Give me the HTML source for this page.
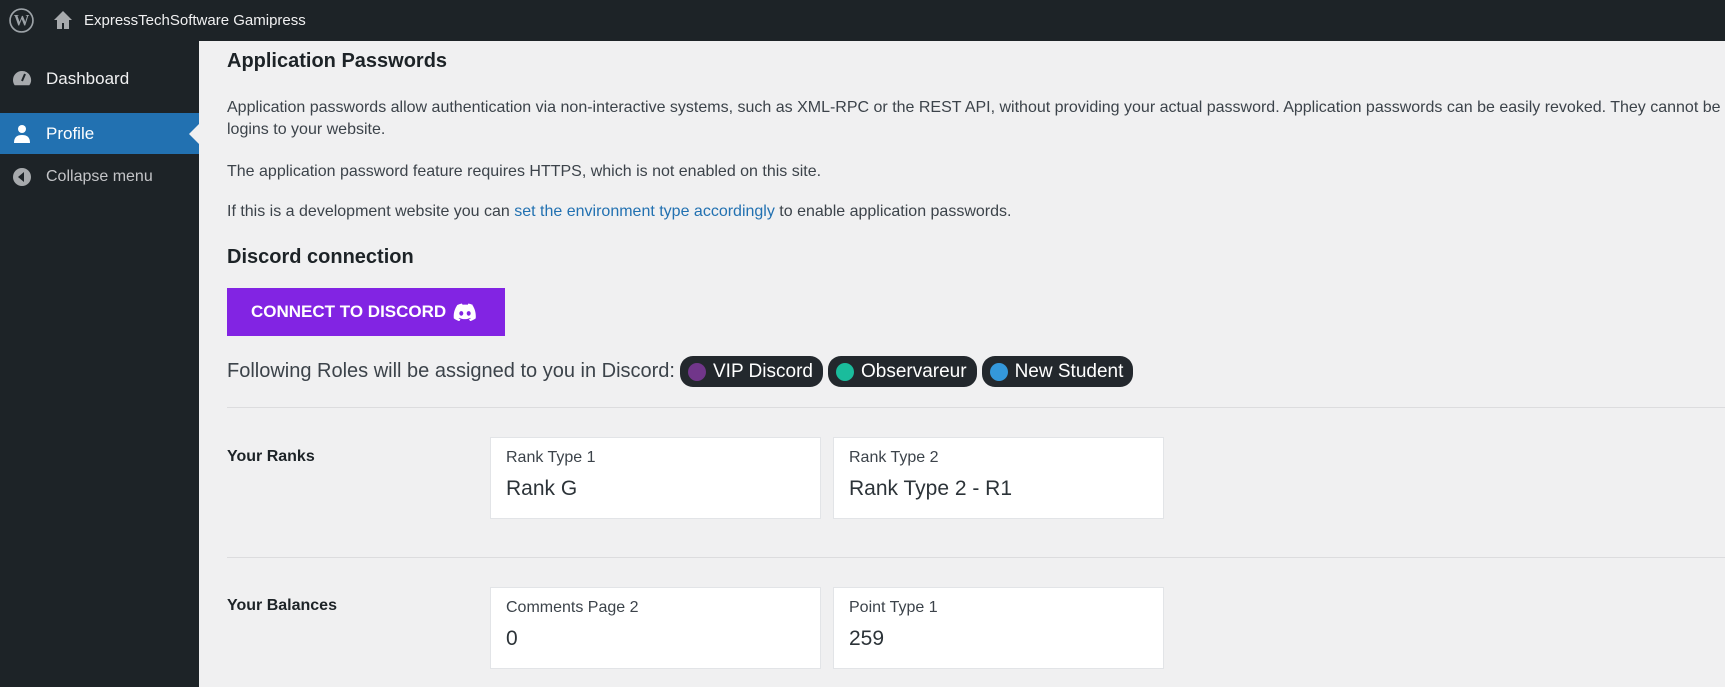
<!DOCTYPE html>
<html><head><meta charset="utf-8"><style>
*{box-sizing:border-box;margin:0;padding:0}
body{width:1725px;height:687px;overflow:hidden;background:#f0f0f1;font-family:"Liberation Sans",sans-serif;color:#3c434a;position:relative}
#bar{position:absolute;left:0;top:0;width:1725px;height:41px;background:#1d2327;color:#f0f0f1;font-size:16px}
#side{position:absolute;left:0;top:41px;width:199px;height:646px;background:#1d2327}
.mi{position:absolute;left:0;width:199px;color:#f0f0f1;font-size:17px;display:flex;align-items:center;padding-left:12px}
.mi svg{margin-right:14px}
.abs{position:absolute;white-space:nowrap}
h2{position:absolute;font-size:20px;font-weight:600;color:#1d2327;left:227px}
p{position:absolute;left:227px;font-size:16px;white-space:nowrap;color:#3c434a}
.card{position:absolute;background:#fff;border:1px solid #e2e4e7;width:331px;height:82px}
.card .t{position:absolute;left:15px;top:11px;font-size:16px;color:#3c434a}
.card .v{position:absolute;left:15px;top:39px;font-size:21px;color:#2c3338}
.pill{display:inline-flex;align-items:center;background:#23282d;color:#fff;border-radius:13px;height:31px;padding:0 10px 0 8px;margin-left:5px;font-size:19px}
.pill i{width:18px;height:18px;border-radius:50%;margin-right:7px;display:inline-block}
.hr{position:absolute;left:227px;width:1498px;height:1px;background:#dcdcde}
.lbl{position:absolute;left:227px;font-size:16px;font-weight:bold;color:#1d2327}
</style></head><body>
<div id="bar">
<svg class="abs" style="left:9px;top:8px" width="25" height="25" viewBox="0 0 24 24"><circle cx="12" cy="12" r="11" fill="none" stroke="#9ca2a7" stroke-width="1.6"/><text x="12" y="17" text-anchor="middle" font-family="Liberation Serif" font-weight="bold" font-size="15" fill="#9ca2a7">W</text></svg>
<svg class="abs" style="left:53px;top:10px" width="20" height="20" viewBox="0 0 20 20"><path d="M10 1 L1 10 H4 V19 H9 V13 H11 V19 H16 V10 H19 Z" fill="#a7aaad"/></svg>
<div class="abs" style="left:84px;top:12px;font-size:15px">ExpressTechSoftware Gamipress</div>
</div>
<div id="side">
<div class="mi" style="top:18px;height:40px"><svg width="20" height="20" viewBox="0 0 20 20"><path d="M10 2a9 9 0 0 0-9 9c0 2 .6 3.8 1.7 5.3h14.6A9 9 0 0 0 10 2z" fill="#a7aaad"/><path d="M10 12 L13 5" stroke="#1d2327" stroke-width="2"/></svg>Dashboard</div>
<div class="mi" style="top:72px;height:41px;background:#2271b1;color:#fff"><svg width="20" height="20" viewBox="0 0 20 20"><circle cx="10" cy="5" r="4" fill="#fff"/><path d="M2 19c0-6 3-8 8-8s8 2 8 8z" fill="#fff"/></svg>Profile</div>
<div style="position:absolute;left:189px;top:83px;width:0;height:0;border-top:10px solid transparent;border-bottom:10px solid transparent;border-right:10px solid #f0f0f1"></div>
<div class="mi" style="top:118px;height:36px;color:#c3c4c7;font-size:16px"><svg width="20" height="20" viewBox="0 0 20 20"><circle cx="10" cy="10" r="9" fill="#a7aaad"/><path d="M12 5 L6 10 L12 15z" fill="#1d2327"/></svg>Collapse menu</div>
</div>
<h2 style="top:50px">Application Passwords</h2>
<p style="top:99px">Application passwords allow authentication via non-interactive systems, such as XML-RPC or the REST API, without providing your actual password. Application passwords can be easily revoked. They cannot be</p>
<p style="top:121px">logins to your website.</p>
<p style="top:163px">The application password feature requires HTTPS, which is not enabled on this site.</p>
<p style="top:203px">If this is a development website you can <span style="color:#2271b1">set the environment type accordingly</span> to enable application passwords.</p>
<h2 style="top:246px">Discord connection</h2>
<div class="abs" style="left:227px;top:288px;width:278px;height:48px;background:#8224e3;color:#fff;font-weight:bold;font-size:17px;display:flex;align-items:center;padding-left:24px">CONNECT TO DISCORD <svg style="margin-left:7px" width="24" height="18" viewBox="0 0 24 18"><path d="M20 2C18.5 1.3 17 .8 15.4.5l-.7 1.3c-1.7-.3-3.4-.3-5.1 0L8.9.5C7.3.8 5.8 1.3 4.3 2 1.2 6.6.4 11 .8 15.4c1.9 1.4 3.7 2.2 5.5 2.8l1.2-1.9c-.7-.3-1.3-.6-1.9-1l.5-.4c3.7 1.7 7.7 1.7 11.3 0l.5.4c-.6.4-1.2.7-1.9 1l1.2 1.9c1.8-.6 3.6-1.4 5.5-2.8.5-5.1-.8-9.5-3.3-13.4zM8.3 12.7c-1.1 0-2-1-2-2.3s.9-2.3 2-2.3 2 1 2 2.3-.9 2.3-2 2.3zm7.4 0c-1.1 0-2-1-2-2.3s.9-2.3 2-2.3 2 1 2 2.3-.9 2.3-2 2.3z" fill="#fff"/></svg></div>
<div class="abs" style="left:227px;top:356px;font-size:20px;display:flex;align-items:center;color:#3c434a">Following Roles will be assigned to you in Discord:<span class="pill"><i style="background:#71368a"></i>VIP Discord</span><span class="pill"><i style="background:#1abc9c"></i>Observareur</span><span class="pill"><i style="background:#3498db"></i>New Student</span></div>
<div class="hr" style="top:407px"></div>
<div class="lbl" style="top:448px">Your Ranks</div>
<div class="card" style="left:490px;top:437px"><div class="t">Rank Type 1</div><div class="v">Rank G</div></div>
<div class="card" style="left:833px;top:437px"><div class="t">Rank Type 2</div><div class="v">Rank Type 2 - R1</div></div>
<div class="hr" style="top:557px"></div>
<div class="lbl" style="top:597px">Your Balances</div>
<div class="card" style="left:490px;top:587px"><div class="t">Comments Page 2</div><div class="v">0</div></div>
<div class="card" style="left:833px;top:587px"><div class="t">Point Type 1</div><div class="v">259</div></div>
</body></html>
